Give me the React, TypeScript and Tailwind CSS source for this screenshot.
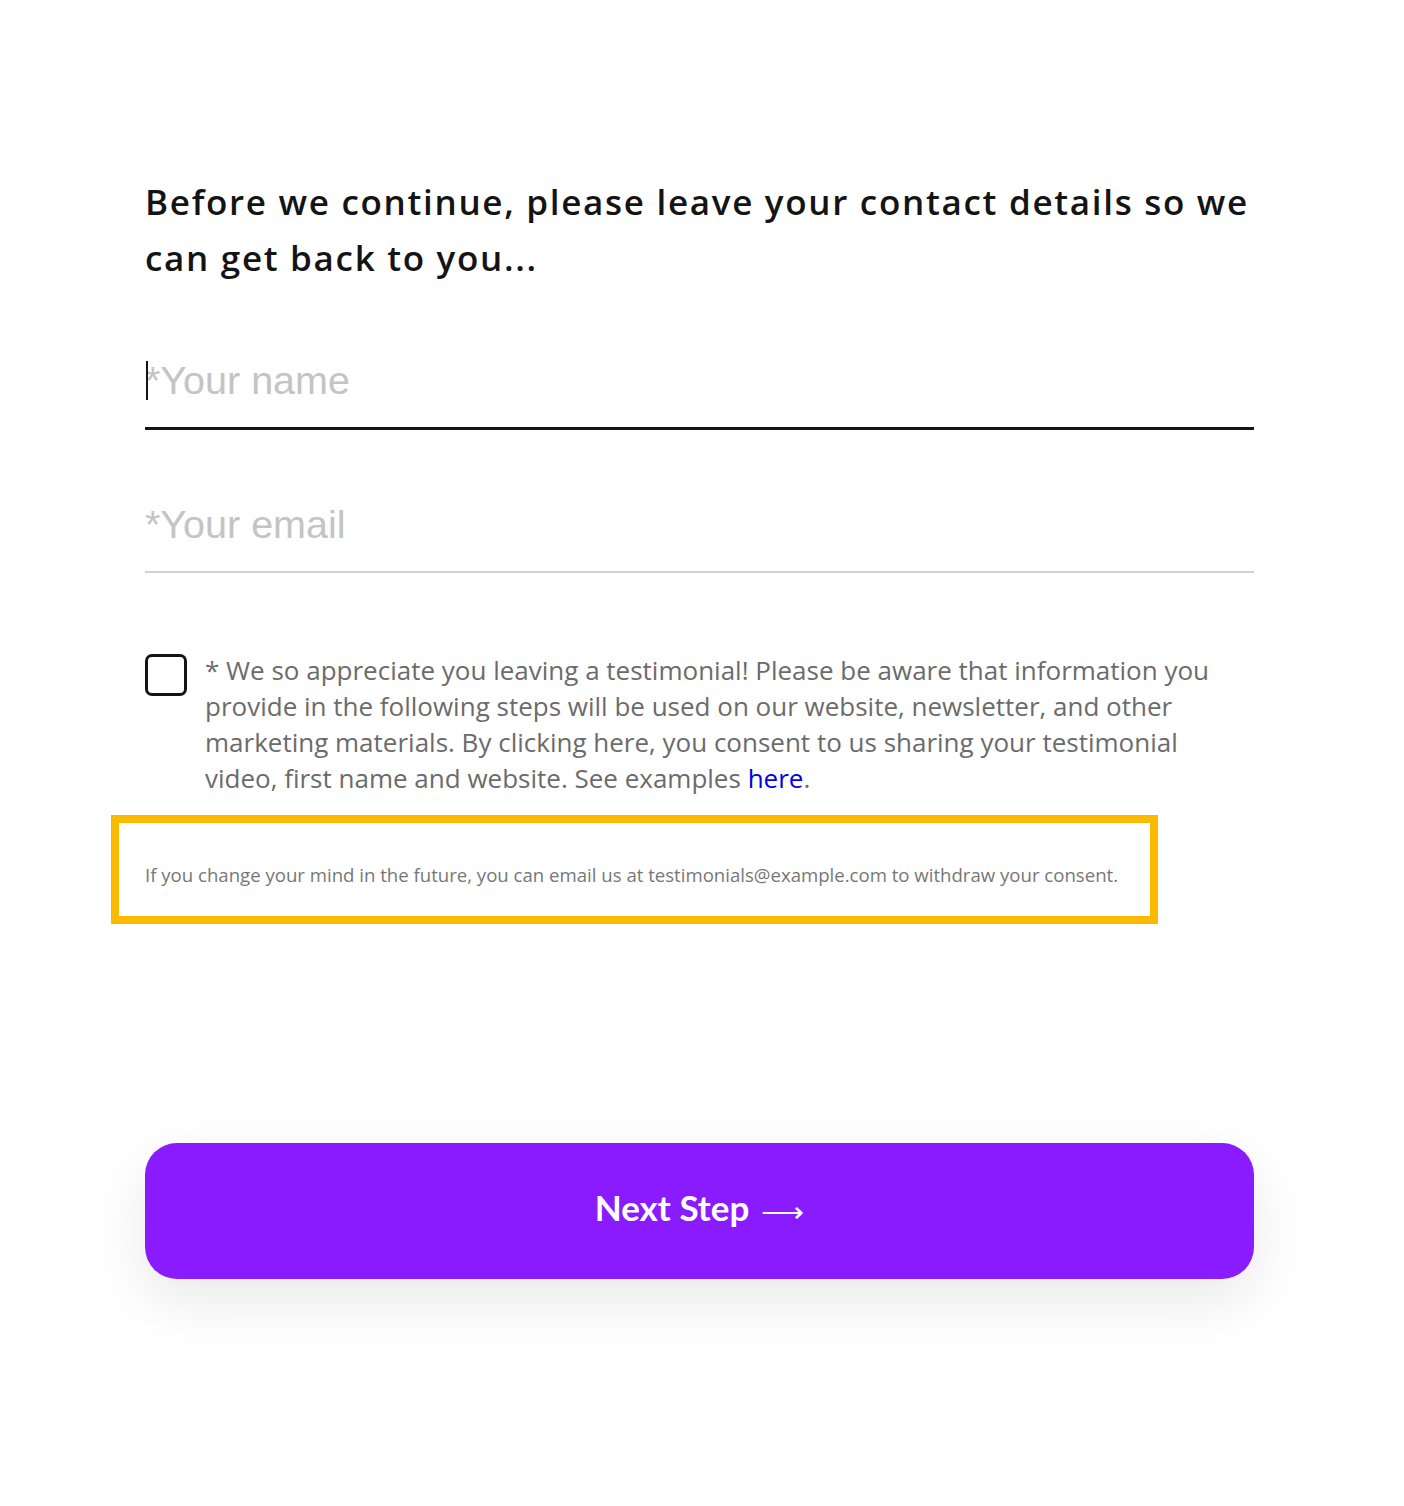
import React from "react"

const sans = "font-['Open_Sans','Lato',sans-serif]"

export default function App() {
  return (
    <div className={`min-h-[1506px] bg-white ${sans}`}>
      <div className="ml-[145px] w-[1109px] pt-[174px]">
        <h1 className="text-[35px] font-semibold leading-[56px] tracking-[1.7px] text-[#141414]">
          Before we continue, please leave your contact details so we can get back to you...
        </h1>

        <form className="mt-[74px] flex flex-col">
          <div className="relative">
            <input
              type="text"
              placeholder="*Your name"
              className="h-[70px] w-full border-b-[3px] border-[#141414] pb-[26px] font-['Liberation_Sans',Arial,sans-serif] text-[39.5px] text-[#141414] outline-none placeholder:text-[#c4c4c4]"
            />
            <span className="absolute left-[1px] top-[1px] h-[39px] w-[2px] bg-[#141414]" />
          </div>

          <input
            type="email"
            placeholder="*Your email"
            className="mt-[73px] h-[70px] w-full border-b-2 border-[#d2d2d2] pb-[26px] font-['Liberation_Sans',Arial,sans-serif] text-[39.5px] text-[#141414] outline-none placeholder:text-[#c4c4c4]"
          />

          <label className="mt-[79px] flex items-start gap-[18px]">
            <span className="mt-[2px] h-[42px] w-[42px] shrink-0 rounded-[7px] border-[3px] border-[#141414]" />
            <span className="text-[26px] leading-[36px] text-[#6b6b6b]">
              * We so appreciate you leaving a testimonial! Please be aware that information you
              provide in the following steps will be used on our website, newsletter, and other
              marketing materials. By clicking here, you consent to us sharing your testimonial
              video, first name and website. See examples <a className="text-[#0000ee]">here</a>.
            </span>
          </label>
        </form>
      </div>

      <div className="ml-[111px] mt-[19px] flex h-[109px] w-[1047px] items-center border-[8px] border-[#fbb900] pl-[26px] pt-[10px]">
        <p className="text-[18.6px] text-[#777777]">
          If you change your mind in the future, you can email us at testimonials@example.com to
          withdraw your consent.
        </p>
      </div>

      <div className="ml-[145px] mt-[219px] w-[1109px]">
        <button className="flex h-[136px] w-full items-center justify-center gap-[12px] rounded-[32px] bg-[#8a1bff] pb-[8px] text-white shadow-[0_22px_60px_rgba(0,0,0,0.09)]">
          <span className="font-['Lato',sans-serif] text-[35px] font-bold">Next Step</span>
          <span className="mt-[6px] text-[30px]">⟶</span>
        </button>
      </div>
    </div>
  )
}
